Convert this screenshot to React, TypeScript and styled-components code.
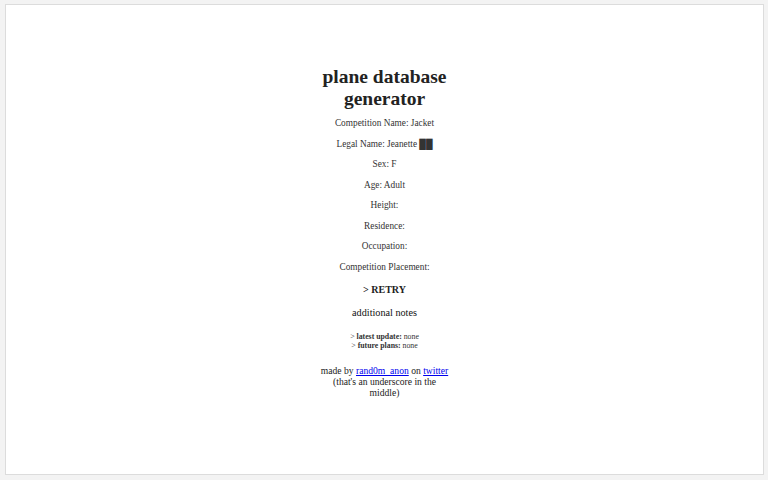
import React from 'react';
import styled, { createGlobalStyle } from 'styled-components';

const GlobalStyle = createGlobalStyle`
  html, body {
    margin: 0;
    padding: 0;
    background: #f3f3f3;
  }
  body {
    font-family: "Liberation Serif", "Times New Roman", serif;
    color: #222;
  }
`;

const serif = `"Liberation Serif", "Times New Roman", serif`;

const Page = styled.div`
  box-sizing: border-box;
  height: 480px;
  padding: 4px 4px 5px 5px;
`;

const Panel = styled.main`
  box-sizing: border-box;
  height: 100%;
  background: #fff;
  border: 1px solid #dcdcdc;
  display: flex;
  justify-content: center;
  padding-top: 61px;
`;

const Column = styled.div`
  width: 130px;
  text-align: center;
  font-family: ${serif};
`;

const Title = styled.h1`
  margin: 0 0 3px;
  font-family: ${serif};
  font-size: 19.5px;
  line-height: 22px;
  font-weight: bold;
  color: #222;
`;

const Field = styled.p`
  margin: 0;
  font-family: ${serif};
  font-size: 9.3px;
  line-height: 20.5px;
  color: #333;
`;

const Retry = styled.p`
  margin: 2px 0 0;
  font-family: ${serif};
  font-size: 10px;
  line-height: 22px;
  font-weight: bold;
  color: #222;
`;

const Notes = styled.p`
  margin: 0;
  font-family: ${serif};
  font-size: 10.2px;
  line-height: 24px;
  color: #111;
`;

const Updates = styled.div`
  margin-top: 7px;
  font-family: ${serif};
  font-size: 7.8px;
  line-height: 9px;
  color: #333;
`;

const Credit = styled.p`
  margin: 15px 0 0;
  font-family: ${serif};
  font-size: 9.6px;
  line-height: 11px;
  color: #222;

  a {
    color: #0000ee;
  }
`;

export default function App() {
  return (
    <>
      <GlobalStyle />
      <Page>
        <Panel>
          <Column>
            <Title>plane database generator</Title>
            <Field>Competition Name: Jacket</Field>
            <Field>Legal Name: Jeanette ██</Field>
            <Field>Sex: F</Field>
            <Field>Age: Adult</Field>
            <Field>Height:</Field>
            <Field>Residence:</Field>
            <Field>Occupation:</Field>
            <Field>Competition Placement:</Field>
            <Retry>&gt; RETRY</Retry>
            <Notes>additional notes</Notes>
            <Updates>
              &gt; <b>latest update:</b> none
              <br />
              &gt; <b>future plans:</b> none
            </Updates>
            <Credit>
              made by <a href="#">rand0m_anon</a> on <a href="#">twitter</a> (that's an underscore in the middle)
            </Credit>
          </Column>
        </Panel>
      </Page>
    </>
  );
}
